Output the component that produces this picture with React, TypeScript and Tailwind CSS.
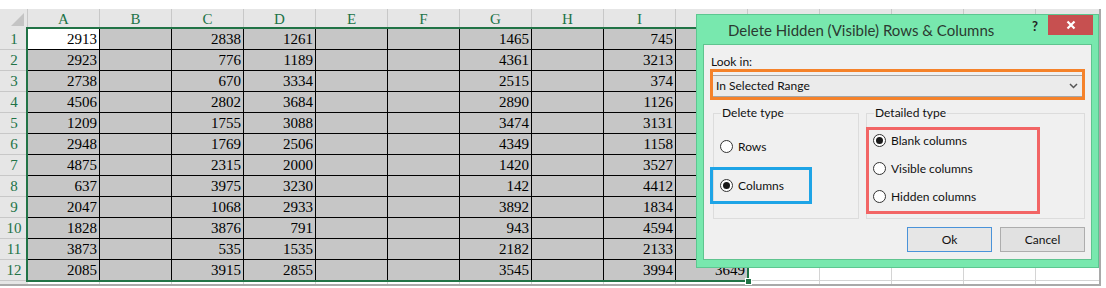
import React from 'react';

const cols = ['A', 'B', 'C', 'D', 'E', 'F', 'G', 'H', 'I', 'J', 'K', 'L', 'M', 'N', 'O'];

// values per selected column, empty = blank column (J sits under the dialog, only its last value shows)
const data: Record<string, (number | null)[]> = {
  A: [2913, 2923, 2738, 4506, 1209, 2948, 4875, 637, 2047, 1828, 3873, 2085],
  C: [2838, 776, 670, 2802, 1755, 1769, 2315, 3975, 1068, 3876, 535, 3915],
  D: [1261, 1189, 3334, 3684, 3088, 2506, 2000, 3230, 2933, 791, 1535, 2855],
  G: [1465, 4361, 2515, 2890, 3474, 4349, 1420, 142, 3892, 943, 2182, 3545],
  I: [745, 3213, 374, 1126, 3131, 1158, 3527, 4412, 1834, 4594, 2133, 3994],
  J: [null, null, null, null, null, null, null, null, null, null, null, 3649],
};

const selected = ['A', 'B', 'C', 'D', 'E', 'F', 'G', 'H', 'I', 'J'];

function Radio({ checked, label }: { checked?: boolean; label: string }) {
  return (
    <div className="flex items-center gap-[5px]">
      <div className="w-[13px] h-[13px] rounded-full border border-[#333] bg-white flex items-center justify-center">
        {checked && <div className="w-[7px] h-[7px] rounded-full bg-[#1a1a1a]" />}
      </div>
      <span className="text-[12px] text-[#111] leading-none">{label}</span>
    </div>
  );
}

function GroupBox({ title, className, children }: { title: string; className: string; children: React.ReactNode }) {
  return (
    <div className={`relative shrink-0 h-[106px] border border-[#dcdcdc] flex flex-col ${className}`}>
      <span className="absolute -top-[8px] left-[7px] bg-[#f0f0f0] px-[1px] text-[12px] leading-[14px] text-[#111]">{title}</span>
      {children}
    </div>
  );
}

export default function App() {
  return (
    <div className="relative w-[1106px] h-[288px] bg-white overflow-hidden" style={{ fontFamily: '"Liberation Serif", serif' }}>
      <div className="mt-[9px] w-[1101px] h-[277px] overflow-hidden border-r-2 border-b-2 border-[#a9a9a9]">
        {/* column headers */}
        <div className="flex h-[20px] bg-[#e6e6e6]">
          <div className="w-[28px] shrink-0 border-r border-[#c8c8c8] flex items-end justify-end p-[3px]">
            <div className="w-0 h-0 border-l-[13px] border-l-transparent border-b-[13px] border-b-[#c4c4c4]" />
          </div>
          {cols.map((c) => (
            <div
              key={c}
              className={`w-[72px] shrink-0 border-r border-[#c8c8c8] flex items-center justify-center text-[15px] leading-none ${
                selected.includes(c) ? 'text-[#217346]' : 'text-[#444] border-b border-b-[#ababab]'
              }`}
            >
              {selected.includes(c) ? c : ''}
            </div>
          ))}
        </div>

        {/* rows */}
        {Array.from({ length: 13 }).map((_, r) => (
          <div key={r} className="flex h-[21px]">
            <div className="w-[28px] shrink-0 bg-[#e6e6e6] border-b border-[#c8c8c8] flex items-center justify-center text-[15px] text-[#217346] leading-none">
              {r < 12 ? r + 1 : ''}
            </div>
            {cols.map((c) => {
              const inSel = r < 12 && selected.includes(c);
              const v = data[c]?.[r];
              return (
                <div
                  key={c}
                  className={`w-[72px] shrink-0 border-r border-b flex items-center justify-end pr-[2px] text-[15px] text-black leading-none ${
                    inSel ? (r === 0 && c === 'A' ? 'bg-white border-black' : 'bg-[#c6c6c6] border-black') : 'bg-white border-[#d4d4d4]'
                  }`}
                >
                  {inSel && v != null ? v : ''}
                </div>
              );
            })}
          </div>
        ))}
      </div>

      {/* selection outline + fill handle */}
      <div className="absolute left-[26px] top-[27px] w-[723px] h-[255px] border-2 border-[#217346]" />
      <div className="absolute left-[745px] top-[278px] w-[7px] h-[7px] bg-[#217346] border border-white" />

      {/* dialog */}
      <div
        className="absolute left-[696px] top-[14px] w-[403px] h-[254px] bg-[#78e8ae] border border-[#5cc790] flex flex-col"
        style={{ fontFamily: 'Lato, "Open Sans", sans-serif' }}
      >
        <div className="h-[29px] shrink-0 flex items-start">
          <span className="flex-1 pl-[31px] pt-[6px] text-[15px] leading-[18px] text-[#2b3a31]">
            Delete Hidden (Visible) Rows &amp; Columns
          </span>
          <span className="mr-[10px] pt-[3px] text-[13px] leading-[16px] font-bold text-[#222]">?</span>
          <div className="mr-[5px] w-[45px] h-[20px] bg-[#c75050] flex items-center justify-center">
            <svg width="10" height="10" viewBox="0 0 10 10">
              <path d="M1.5 1.5 L8.5 8.5 M8.5 1.5 L1.5 8.5" stroke="white" strokeWidth="2.2" />
            </svg>
          </div>
        </div>

        <div className="mx-[6px] h-[216px] bg-[#f0f0f0] border border-[#5fc48f] flex flex-col pt-[10px] px-[6px]">
          <div className="pl-[1px] text-[12px] leading-[14px] text-[#111]">Look in:</div>

          <div className="h-[31px] border-[3px] border-[#f5822a]">
            <div className="mt-[3px] h-[22px] border-y border-[#a6a6a6] bg-[#ebebeb] flex items-center justify-between pl-[3px] pr-[4px]">
              <span className="text-[12px] text-[#111] leading-none">In Selected Range</span>
              <svg width="9" height="6" viewBox="0 0 9 6">
                <path d="M1 1 L4.5 4.5 L8 1" stroke="#555" strokeWidth="1.5" fill="none" />
              </svg>
            </div>
          </div>

          <div className="mt-[13px] pl-[3px] flex gap-[7px]">
            <GroupBox title="Delete type" className="w-[146px] pt-[26px] pl-[6px]">
              <Radio label="Rows" />
              <div className="mt-[14px] -ml-[10px] w-[102px] h-[37px] border-[3px] border-[#1ea4e6] flex items-center pl-[7px]">
                <Radio checked label="Columns" />
              </div>
            </GroupBox>

            <GroupBox title="Detailed type" className="w-[219px] pt-[13px]">
              <div className="-ml-[1px] w-[174px] h-[87px] border-[3px] border-[#f26565] flex flex-col gap-[15px] pt-[4px] pl-[4px]">
                <Radio checked label="Blank columns" />
                <Radio label="Visible columns" />
                <Radio label="Hidden columns" />
              </div>
            </GroupBox>
          </div>

          <div className="mt-[8px] flex justify-end gap-[8px]">
            <button className="w-[85px] h-[25px] border border-[#4a93d9] bg-[#e6e6e6] text-[12px] text-[#111]">Ok</button>
            <button className="w-[85px] h-[25px] border border-[#adadad] bg-[#e1e1e1] text-[12px] text-[#111]">Cancel</button>
          </div>
        </div>
      </div>
    </div>
  );
}
